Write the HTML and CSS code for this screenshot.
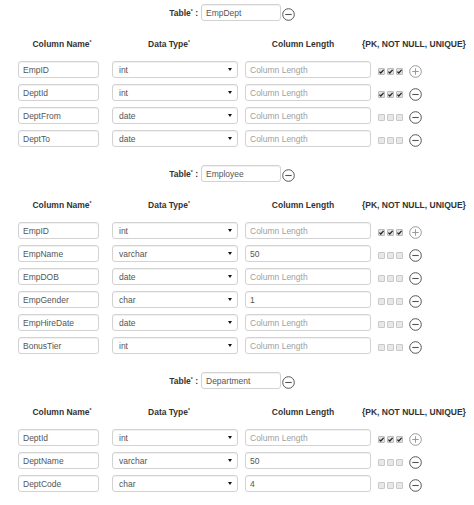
FILE: index.html
```html
<!DOCTYPE html>
<html>
<head>
<meta charset="utf-8">
<link rel="stylesheet" href="styles.css">
</head>
<body>
<svg width="0" height="0" class="defs">
  <symbol id="minus" viewBox="0 0 13 13"><circle cx="6.5" cy="6.5" r="5.8" fill="none" stroke="currentColor" stroke-width="1"/><line x1="3.3" y1="6.5" x2="9.7" y2="6.5" stroke="currentColor" stroke-width="1.1"/></symbol>
  <symbol id="plus" viewBox="0 0 13 13"><circle cx="6.5" cy="6.5" r="5.8" fill="none" stroke="currentColor" stroke-width="1"/><line x1="3.3" y1="6.5" x2="9.7" y2="6.5" stroke="currentColor" stroke-width="1"/><line x1="6.5" y1="3.3" x2="6.5" y2="9.7" stroke="currentColor" stroke-width="1"/></symbol>
  <symbol id="tick" viewBox="0 0 7 7"><path d="M1.4 3.6 L2.8 5 L5.6 1.8" fill="none" stroke="#222" stroke-width="1.2"/></symbol>
</svg>

<section class="table-block">
  <div class="title"><span class="title-label">Table<sup>*</sup> :</span><input class="field title-input" value="EmpDept"><svg class="icon minus"><use href="#minus"/></svg></div>
  <div class="head"><span class="h-name">Column Name<sup>*</sup></span><span class="h-type">Data Type<sup>*</sup></span><span class="h-len">Column Length</span><span class="h-flags">{PK, NOT NULL, UNIQUE}</span></div>
  <div class="rows">
    <div class="row"><input class="field name" value="EmpID"><div class="select"><span>int</span></div><input class="field len" placeholder="Column Length"><div class="checks"><span class="cb on"><svg><use href="#tick"/></svg></span><span class="cb on"><svg><use href="#tick"/></svg></span><span class="cb on"><svg><use href="#tick"/></svg></span></div><svg class="icon plus"><use href="#plus"/></svg></div>
    <div class="row"><input class="field name" value="DeptId"><div class="select"><span>int</span></div><input class="field len" placeholder="Column Length"><div class="checks"><span class="cb on"><svg><use href="#tick"/></svg></span><span class="cb on"><svg><use href="#tick"/></svg></span><span class="cb on"><svg><use href="#tick"/></svg></span></div><svg class="icon minus"><use href="#minus"/></svg></div>
    <div class="row"><input class="field name" value="DeptFrom"><div class="select"><span>date</span></div><input class="field len" placeholder="Column Length"><div class="checks"><span class="cb"></span><span class="cb"></span><span class="cb"></span></div><svg class="icon minus"><use href="#minus"/></svg></div>
    <div class="row"><input class="field name" value="DeptTo"><div class="select"><span>date</span></div><input class="field len" placeholder="Column Length"><div class="checks"><span class="cb"></span><span class="cb"></span><span class="cb"></span></div><svg class="icon minus"><use href="#minus"/></svg></div>
  </div>
</section>

<section class="table-block">
  <div class="title"><span class="title-label">Table<sup>*</sup> :</span><input class="field title-input" value="Employee"><svg class="icon minus"><use href="#minus"/></svg></div>
  <div class="head"><span class="h-name">Column Name<sup>*</sup></span><span class="h-type">Data Type<sup>*</sup></span><span class="h-len">Column Length</span><span class="h-flags">{PK, NOT NULL, UNIQUE}</span></div>
  <div class="rows">
    <div class="row"><input class="field name" value="EmpID"><div class="select"><span>int</span></div><input class="field len" placeholder="Column Length"><div class="checks"><span class="cb on"><svg><use href="#tick"/></svg></span><span class="cb on"><svg><use href="#tick"/></svg></span><span class="cb on"><svg><use href="#tick"/></svg></span></div><svg class="icon plus"><use href="#plus"/></svg></div>
    <div class="row"><input class="field name" value="EmpName"><div class="select"><span>varchar</span></div><input class="field len" value="50"><div class="checks"><span class="cb"></span><span class="cb"></span><span class="cb"></span></div><svg class="icon minus"><use href="#minus"/></svg></div>
    <div class="row"><input class="field name" value="EmpDOB"><div class="select"><span>date</span></div><input class="field len" placeholder="Column Length"><div class="checks"><span class="cb"></span><span class="cb"></span><span class="cb"></span></div><svg class="icon minus"><use href="#minus"/></svg></div>
    <div class="row"><input class="field name" value="EmpGender"><div class="select"><span>char</span></div><input class="field len" value="1"><div class="checks"><span class="cb"></span><span class="cb"></span><span class="cb"></span></div><svg class="icon minus"><use href="#minus"/></svg></div>
    <div class="row"><input class="field name" value="EmpHireDate"><div class="select"><span>date</span></div><input class="field len" placeholder="Column Length"><div class="checks"><span class="cb"></span><span class="cb"></span><span class="cb"></span></div><svg class="icon minus"><use href="#minus"/></svg></div>
    <div class="row"><input class="field name" value="BonusTier"><div class="select"><span>int</span></div><input class="field len" placeholder="Column Length"><div class="checks"><span class="cb"></span><span class="cb"></span><span class="cb"></span></div><svg class="icon minus"><use href="#minus"/></svg></div>
  </div>
</section>

<section class="table-block">
  <div class="title"><span class="title-label">Table<sup>*</sup> :</span><input class="field title-input" value="Department"><svg class="icon minus"><use href="#minus"/></svg></div>
  <div class="head"><span class="h-name">Column Name<sup>*</sup></span><span class="h-type">Data Type<sup>*</sup></span><span class="h-len">Column Length</span><span class="h-flags">{PK, NOT NULL, UNIQUE}</span></div>
  <div class="rows">
    <div class="row"><input class="field name" value="DeptId"><div class="select"><span>int</span></div><input class="field len" placeholder="Column Length"><div class="checks"><span class="cb on"><svg><use href="#tick"/></svg></span><span class="cb on"><svg><use href="#tick"/></svg></span><span class="cb on"><svg><use href="#tick"/></svg></span></div><svg class="icon plus"><use href="#plus"/></svg></div>
    <div class="row"><input class="field name" value="DeptName"><div class="select"><span>varchar</span></div><input class="field len" value="50"><div class="checks"><span class="cb"></span><span class="cb"></span><span class="cb"></span></div><svg class="icon minus"><use href="#minus"/></svg></div>
    <div class="row"><input class="field name" value="DeptCode"><div class="select"><span>char</span></div><input class="field len" value="4"><div class="checks"><span class="cb"></span><span class="cb"></span><span class="cb"></span></div><svg class="icon minus"><use href="#minus"/></svg></div>
  </div>
</section>
</body>
</html>
```

FILE: styles.css
```css
* { box-sizing: border-box; }
html, body { margin: 0; background: #fff; }
body {
  padding-top: 4px;
  font-family: "Liberation Sans", Arial, sans-serif;
  font-size: 8.5px;
  color: #333;
}
.defs { position: absolute; width: 0; height: 0; }
sup { font-size: 5px; vertical-align: 3px; line-height: 0; }

.table-block { margin-bottom: 18px; }

.title { display: flex; align-items: center; height: 17px; margin-bottom: 15px; }
.title-label { width: 98px; margin-left: 100px; margin-right: 3px; text-align: right; font-weight: bold; }
.title-input { width: 80px; }
.title .icon { margin-left: 1px; margin-top: 3px; }

.field {
  height: 17px;
  border: 1px solid #d2d2d2;
  border-radius: 3px;
  padding: 0 4px;
  font-family: inherit;
  font-size: 8.5px;
  color: #555;
  background: #fff;
  box-shadow: inset 0 1px 1px rgba(0,0,0,0.06);
  outline: none;
}
.field::placeholder { color: #a0a0a0; }

.head { display: flex; height: 16px; line-height: 16px; margin-bottom: 9px; font-weight: bold; }
.head span { text-align: center; white-space: nowrap; }
.h-name { width: 108px; margin-left: 8px; }
.h-type { width: 106px; }
.h-len { width: 118px; margin-left: 22px; }
.h-flags { width: 100px; }

.rows { display: flex; flex-direction: column; gap: 6px; }
.row { display: flex; align-items: center; height: 17px; padding-left: 18px; }
.name { width: 81px; }
.select {
  position: relative;
  width: 126px;
  margin-left: 13px;
  height: 17px;
  line-height: 16px;
  border: 1px solid #d2d2d2;
  border-radius: 3px;
  padding: 0 6px;
  color: #555;
  box-shadow: inset 0 1px 1px rgba(0,0,0,0.06);
}
.select::after {
  content: "";
  position: absolute;
  right: 5px;
  top: 6px;
  border-left: 2px solid transparent;
  border-right: 2px solid transparent;
  border-top: 3px solid #111;
}
.len { width: 126px; margin-left: 7px; }

.checks { display: flex; gap: 2px; margin-left: 7px; margin-top: 4px; }
.cb {
  width: 7px; height: 7px;
  border: 1px solid #c8c8c8;
  border-radius: 1px;
  background: #e8e8e8;
  display: flex;
}
.cb.on { background: #e0e0e0; border-color: #bbb; }
.cb svg { width: 7px; height: 7px; margin: -1px; }

.icon { width: 13px; height: 13px; flex: none; }
.row .icon { margin-left: 6px; margin-top: 3px; }
.icon.minus { color: #555; }
.icon.plus { color: #999; }
```
